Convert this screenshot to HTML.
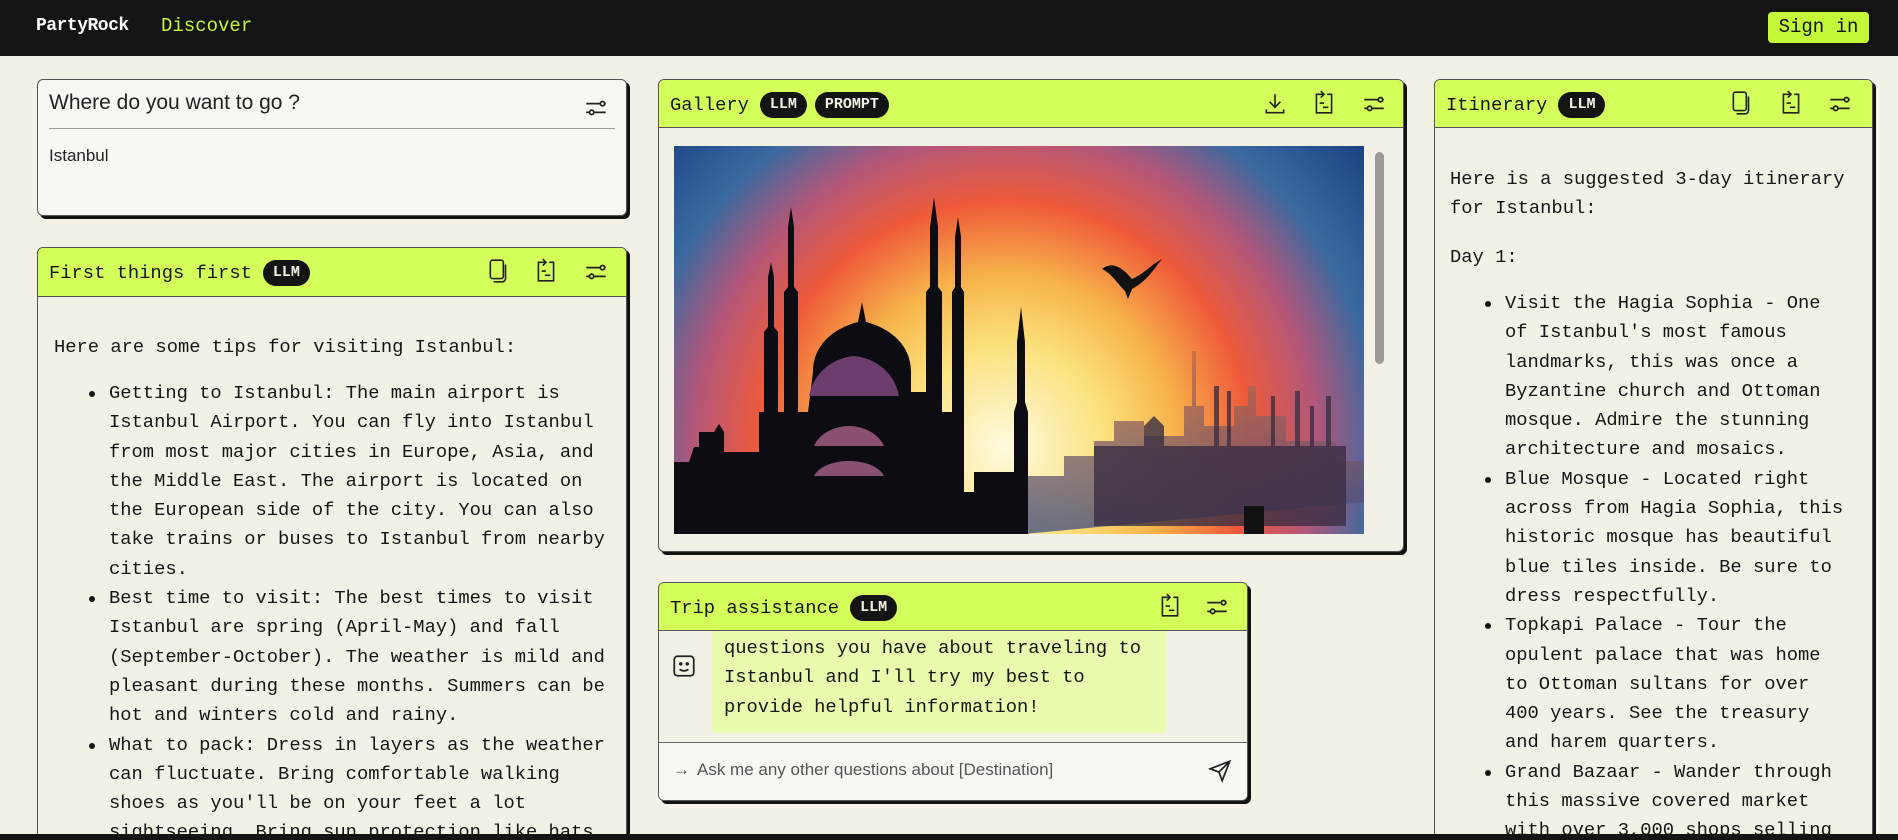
<!DOCTYPE html>
<html style="height:840px;overflow:hidden"><head><meta charset="utf-8">
<style>
*{box-sizing:border-box;margin:0;padding:0}
body{width:1898px;height:840px;overflow:hidden;background:#f3f0e6;font-family:"Liberation Mono",monospace;color:#161616;position:relative}
.top{position:absolute;left:0;top:0;width:1898px;height:56px;background:#141414}
.logo{position:absolute;left:36px;top:16px;color:#fff;font-family:"Liberation Mono",monospace;font-weight:bold;font-size:18px;letter-spacing:-0.5px}
.disc{position:absolute;left:161px;top:15px;color:#c6f53a;font-size:19px}
.sign{position:absolute;left:1768px;top:12px;width:101px;height:31px;background:#c4f93a;border-radius:4px;font-size:19px;line-height:31px;text-align:center;color:#111}
.card{position:absolute;border:1.5px solid #555;border-radius:6px;background:#f3f0e6;box-shadow:3px 3px 0 #111;overflow:hidden}
.hd{position:absolute;left:0;top:0;right:0;background:#d4ff5a;border-bottom:1.5px solid #555}
.tt{position:absolute;left:11px;font-size:18.8px;line-height:22px}
.llm{display:inline-block;background:#141414;color:#f3f0e6;border-radius:13px;font-weight:bold;font-size:15px;height:26px;line-height:26px;padding:0 10px;vertical-align:middle;margin-left:11px}
.ic{position:absolute;width:26px;height:26px}
.txt{position:absolute;font-size:18.8px;line-height:29.3px;white-space:pre}
ul{list-style:none;position:absolute;font-size:18.8px;line-height:29.3px}
li{position:relative;white-space:pre}
li:before{content:"";position:absolute;left:-20px;top:12px;width:6px;height:6px;border-radius:50%;background:#161616}
</style></head><body>
<div class="top"></div>
<div class="logo">PartyRock</div>
<div class="disc">Discover</div>
<div class="sign">Sign in</div>

<div class="card" style="left:37px;top:79px;width:590px;height:137px;background:#f8f7f2">
 <div style="position:absolute;left:11px;top:11px;font-family:'Liberation Sans',sans-serif;font-size:21px;color:#222">Where do you want to go ?</div>
 <svg class="ic" style="left:545px;top:15px" viewBox="0 0 24 24" fill="none" stroke="#222" stroke-width="1.6"><path d="M3 8h13M20 8h1M3 16h3M10 16h11"/><circle cx="18" cy="8" r="2"/><circle cx="8" cy="16" r="2"/></svg>
 <div style="position:absolute;left:11px;right:11px;top:48px;border-top:1.5px solid #999"></div>
 <div style="position:absolute;left:11px;top:66px;font-family:'Liberation Sans',sans-serif;font-size:17px;color:#222">Istanbul</div>
</div>

<div class="card" style="left:37px;top:247px;width:590px;height:600px">
 <div class="hd" style="height:49px">
  <div class="tt" style="top:12px">First things first<span class="llm">LLM</span></div>
  <svg class="ic" style="left:448px;top:10px" viewBox="0 0 24 24" fill="none" stroke="#222" stroke-width="1.5"><rect x="4" y="2" width="12" height="17" rx="2"/><path d="M18 6v13a3 3 0 0 1-3 3H7"/></svg>
  <svg class="ic" style="left:495px;top:10px" viewBox="0 0 24 24" fill="none" stroke="#222" stroke-width="1.5"><path d="M9 4H5v17h14V4h-4M9 1l3 3-3 3M12 4H9M8 12h4M11 16h5"/></svg>
  <svg class="ic" style="left:545px;top:11px" viewBox="0 0 24 24" fill="none" stroke="#222" stroke-width="1.6"><path d="M3 8h13M20 8h1M3 16h3M10 16h11"/><circle cx="18" cy="8" r="2"/><circle cx="8" cy="16" r="2"/></svg>
 </div>
 <div class="txt" style="left:16px;top:85px">Here are some tips for visiting Istanbul:</div>
 <ul style="left:71px;top:131px"><li>Getting to Istanbul: The main airport is
Istanbul Airport. You can fly into Istanbul
from most major cities in Europe, Asia, and
the Middle East. The airport is located on
the European side of the city. You can also
take trains or buses to Istanbul from nearby
cities.</li><li>Best time to visit: The best times to visit
Istanbul are spring (April-May) and fall
(September-October). The weather is mild and
pleasant during these months. Summers can be
hot and winters cold and rainy.</li><li>What to pack: Dress in layers as the weather
can fluctuate. Bring comfortable walking
shoes as you'll be on your feet a lot
sightseeing. Bring sun protection like hats</li></ul>
</div>

<div class="card" style="left:658px;top:79px;width:746px;height:473px">
 <div class="hd" style="height:48px">
  <div class="tt" style="top:12px">Gallery<span class="llm">LLM</span><span class="llm" style="margin-left:8px">PROMPT</span></div>
  <svg class="ic" style="left:603px;top:11px" viewBox="0 0 24 24" fill="none" stroke="#222" stroke-width="1.5"><path d="M12 3v12M7 10l5 5 5-5M4 17v3h16v-3"/></svg>
  <svg class="ic" style="left:652px;top:10px" viewBox="0 0 24 24" fill="none" stroke="#222" stroke-width="1.5"><path d="M9 4H5v17h14V4h-4M9 1l3 3-3 3M12 4H9M8 12h4M11 16h5"/></svg>
  <svg class="ic" style="left:702px;top:11px" viewBox="0 0 24 24" fill="none" stroke="#222" stroke-width="1.6"><path d="M3 8h13M20 8h1M3 16h3M10 16h11"/><circle cx="18" cy="8" r="2"/><circle cx="8" cy="16" r="2"/></svg>
 </div>
 <svg style="position:absolute;left:15px;top:66px" width="690" height="388" viewBox="0 0 690 388">
  <defs>
   <radialGradient id="sky" cx="331" cy="300" r="520" gradientUnits="userSpaceOnUse">
    <stop offset="0" stop-color="#fffbe0"/>
    <stop offset="0.2" stop-color="#fbe07a"/>
    <stop offset="0.33" stop-color="#f7b24a"/>
    <stop offset="0.47" stop-color="#ef5a3a"/>
    <stop offset="0.6" stop-color="#b2577a"/>
    <stop offset="0.72" stop-color="#3a6aa0"/>
    <stop offset="1" stop-color="#0b2b72"/>
   </radialGradient>
   <linearGradient id="haze" x1="0" y1="0" x2="0" y2="1"><stop offset="0" stop-color="#c06a4a"/><stop offset="1" stop-color="#3a4a80"/></linearGradient>
  </defs>
  <rect width="690" height="388" fill="url(#sky)"/>
  <path d="M350 388V330h40v-20h30v-15h20v-20h30v15h40v-30h8v-55h4v55h8v20h30v-20h14v-20h8v30h30v25h50v20h40v40z" fill="url(#haze)" opacity="0.75"/>
  <path d="M420 300h50v-20l10-10 10 10v20h50v-60h5v60h8v-55h4v55h40v-50h4v50h20v-55h5v55h10v-40h4v40h12v-50h5v50h15v80H420z" fill="#3a2e44" opacity="0.8"/>
  <path d="M0 388V316h15l5-15h5v-15h15l5-8 5 8v20h35v-40h5v-80l4-5v-50l3-15 3 15v50l4 5v80h6v-120l4-5v-60l3-20 3 20v60l4 5v120h10l5-40c0-30 25-45 45-50l4-20 4 20c20 5 45 20 45 50v20h15v-100l4-5v-60l4-30 4 30v60l4 5v120h10v-120l3-5v-50l3-20 3 20v50l3 5v200h10v-20h40v-60l3-10v-60l4-35 4 35v60l3 10v160z" fill="#0c0c12"/>
  <path d="M135 250c5-25 25-38 45-40 20 2 40 15 45 40z" fill="#6d3d6e"/>
  <path d="M140 300c5-12 20-20 35-20s30 8 35 20z" fill="#8a5070"/>
  <path d="M140 330c5-10 20-15 35-15s30 5 35 15z" fill="#8a5070"/>
  <path d="M428 123c10-8 20-2 30 10 12-5 20-15 30-20-8 10-15 22-30 30l-4 10-3-8c-8-8-14-18-23-22z" fill="#111"/>
  <rect x="570" y="360" width="20" height="28" fill="#111"/>
 </svg>
 <div style="position:absolute;left:716px;top:72px;width:9px;height:212px;border-radius:5px;background:#9c9a94"></div>
</div>

<div class="card" style="left:658px;top:582px;width:590px;height:219px">
 <div class="hd" style="height:48px">
  <div class="tt" style="top:12px">Trip assistance<span class="llm">LLM</span></div>
  <svg class="ic" style="left:498px;top:10px" viewBox="0 0 24 24" fill="none" stroke="#222" stroke-width="1.5"><path d="M9 4H5v17h14V4h-4M9 1l3 3-3 3M12 4H9M8 12h4M11 16h5"/></svg>
  <svg class="ic" style="left:545px;top:11px" viewBox="0 0 24 24" fill="none" stroke="#222" stroke-width="1.6"><path d="M3 8h13M20 8h1M3 16h3M10 16h11"/><circle cx="18" cy="8" r="2"/><circle cx="8" cy="16" r="2"/></svg>
 </div>
 <div style="position:absolute;left:53px;top:48px;width:454px;height:102px;background:#e9fcae;border-radius:0 0 4px 4px"></div>
 <div class="txt" style="left:65px;top:51px">questions you have about traveling to
Istanbul and I'll try my best to
provide helpful information!</div>
 <svg class="ic" style="left:12px;top:70px" viewBox="0 0 24 24" fill="none" stroke="#222" stroke-width="1.6"><rect x="3" y="3" width="18" height="18" rx="3"/><circle cx="9" cy="10" r="0.8" fill="#222"/><circle cx="15" cy="10" r="0.8" fill="#222"/><path d="M8 15c2 2 6 2 8 0"/></svg>
 <div style="position:absolute;left:0;right:0;top:159px;bottom:0;background:#f8f7f2;border-top:1.5px solid #666"></div>
 <div style="position:absolute;left:14px;top:177px;font-family:'Liberation Sans',sans-serif;font-size:17px;color:#555">→</div>
 <div style="position:absolute;left:38px;top:177px;font-family:'Liberation Sans',sans-serif;font-size:17px;color:#555">Ask me any other questions about [Destination]</div>
 <svg class="ic" style="left:548px;top:175px" viewBox="0 0 24 24" fill="none" stroke="#222" stroke-width="1.6"><path d="M3 10L21 3l-7 18-3-8z M11 13l10-10"/></svg>
</div>

<div class="card" style="left:1434px;top:79px;width:439px;height:768px">
 <div class="hd" style="height:48px">
  <div class="tt" style="top:12px">Itinerary<span class="llm">LLM</span></div>
  <svg class="ic" style="left:294px;top:10px" viewBox="0 0 24 24" fill="none" stroke="#222" stroke-width="1.5"><rect x="4" y="2" width="12" height="17" rx="2"/><path d="M18 6v13a3 3 0 0 1-3 3H7"/></svg>
  <svg class="ic" style="left:343px;top:10px" viewBox="0 0 24 24" fill="none" stroke="#222" stroke-width="1.5"><path d="M9 4H5v17h14V4h-4M9 1l3 3-3 3M12 4H9M8 12h4M11 16h5"/></svg>
  <svg class="ic" style="left:392px;top:11px" viewBox="0 0 24 24" fill="none" stroke="#222" stroke-width="1.6"><path d="M3 8h13M20 8h1M3 16h3M10 16h11"/><circle cx="18" cy="8" r="2"/><circle cx="8" cy="16" r="2"/></svg>
 </div>
 <div class="txt" style="left:15px;top:85px">Here is a suggested 3-day itinerary
for Istanbul:</div>
 <div class="txt" style="left:15px;top:163px">Day 1:</div>
 <ul style="left:70px;top:209px"><li>Visit the Hagia Sophia - One
of Istanbul's most famous
landmarks, this was once a
Byzantine church and Ottoman
mosque. Admire the stunning
architecture and mosaics.</li><li>Blue Mosque - Located right
across from Hagia Sophia, this
historic mosque has beautiful
blue tiles inside. Be sure to
dress respectfully.</li><li>Topkapi Palace - Tour the
opulent palace that was home
to Ottoman sultans for over
400 years. See the treasury
and harem quarters.</li><li>Grand Bazaar - Wander through
this massive covered market
with over 3,000 shops selling</li></ul>
</div>
<div style="position:absolute;left:0;top:834px;width:1898px;height:6px;background:#141414"></div>
</body></html>
